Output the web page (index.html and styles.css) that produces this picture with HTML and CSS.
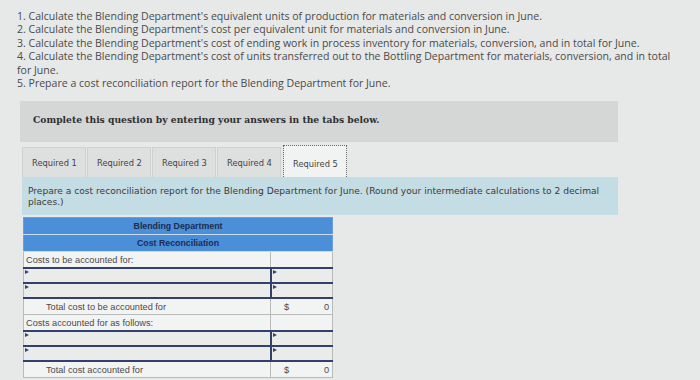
FILE: index.html
```html
<!DOCTYPE html>
<html>
<head>
    <link rel="stylesheet" href="styles.css">
</head>
<body>
    <ol class="steps">
        <li>1. Calculate the Blending Department's equivalent units of production for materials and conversion in June.</li>
        <li>2. Calculate the Blending Department's cost per equivalent unit for materials and conversion in June.</li>
        <li>3. Calculate the Blending Department's cost of ending work in process inventory for materials, conversion, and in total for June.</li>
        <li>4. Calculate the Blending Department's cost of units transferred out to the Bottling Department for materials, conversion, and in total for June.</li>
        <li>5. Prepare a cost reconciliation report for the Blending Department for June.</li>
    </ol>

    <div class="panel">
        <div class="notice">Complete this question by entering your answers in the tabs below.</div>

        <div class="tabs">
            <div class="tab">Required 1</div>
            <div class="tab">Required 2</div>
            <div class="tab">Required 3</div>
            <div class="tab">Required 4</div>
            <div class="tab active">Required 5</div>
        </div>

        <div class="instruction">Prepare a cost reconciliation report for the Blending Department for June. (Round your intermediate calculations to 2 decimal places.)</div>

        <table class="report">
            <colgroup><col class="col-label"><col class="col-value"></colgroup>
            <tr class="head"><th colspan="2">Blending Department</th></tr>
            <tr class="head"><th colspan="2">Cost Reconciliation</th></tr>
            <tr><td>Costs to be accounted for:</td><td></td></tr>
            <tr class="entry"><td></td><td class="value"></td></tr>
            <tr class="entry"><td></td><td class="value"></td></tr>
            <tr class="total"><td class="label">Total cost to be accounted for</td><td class="value"><span class="cur">$</span>0</td></tr>
            <tr><td>Costs accounted for as follows:</td><td></td></tr>
            <tr class="entry"><td></td><td class="value"></td></tr>
            <tr class="entry"><td></td><td class="value"></td></tr>
            <tr class="total"><td class="label">Total cost accounted for</td><td class="value"><span class="cur">$</span>0</td></tr>
        </table>
    </div>
</body>
</html>
```

FILE: styles.css
```css
/* General */
body, html {
    margin: 0;
    padding: 0;
    background: #e7e8e8;
}
body {
    padding: 10px 0 0 17px;
    font-family: "Open Sans", Lato, sans-serif;
    color: #4a4a4a;
}

/* Task list */
.steps {
    list-style: none;
    margin: 0;
    padding: 0;
    width: 660px;
    font-size: 10.55px;
    line-height: 13.4px;
}

/* Question panel */
.panel {
    margin: 11px 0 0 3px;
    width: 598px;
}
.notice {
    background: #d5d7d7;
    height: 41px;
    box-sizing: border-box;
    padding: 13px 0 0 13px;
    font-family: "DejaVu Serif", Georgia, serif;
    font-weight: bold;
    font-size: 9.2px;
    color: #2f2f2f;
}

/* Tabs */
.tabs {
    display: flex;
    align-items: flex-end;
    margin: 3px 0 0 2px;
    height: 32px;
}
.tab {
    width: 64px;
    height: 30px;
    box-sizing: border-box;
    padding: 10px 0 0 9px;
    background: #dedfdf;
    border: 1px solid #cfd0d0;
    border-bottom: none;
    margin-right: 1px;
    font-family: "DejaVu Sans", Verdana, sans-serif;
    font-size: 8.3px;
    color: #444;
}
.tab.active {
    height: 32px;
    margin-left: 1px;
    padding-top: 13px;
    background: #f1f2f2;
    border: 1px dotted #666;
    border-bottom: none;
}

/* Instruction */
.instruction {
    margin-left: 2px;
    background: #c4dce4;
    height: 38px;
    box-sizing: border-box;
    padding: 9px 12px 0 6px;
    font-family: "DejaVu Sans", Verdana, sans-serif;
    font-size: 9.1px;
    line-height: 10.5px;
    color: #3a3a3a;
}

/* Report table */
.report {
    margin: 2px 0 0 3px;
    border-collapse: collapse;
    table-layout: fixed;
    width: 309px;
    font-family: "Liberation Sans", Arial, sans-serif;
    font-size: 9.2px;
    color: #4a4a4a;
}
.col-label { width: 247px; }
.col-value { width: 62px; }
.report th {
    background: #4b8fd9;
    color: #1d2c4f;
    font-size: 8.8px;
    height: 16px;
    padding: 0;
    border: 1px solid #6a9ed6;
    border-bottom: 1px solid #c9dcee;
}
.report td {
    height: 15px;
    padding: 0 2px;
    background: #f2f3f3;
    border: 1px solid #b9baba;
    white-space: nowrap;
}
.report .entry td {
    position: relative;
    height: 13px;
    background: #eaebeb;
    border-top: 2px solid #33406c;
    border-bottom: 2px solid #33406c;
}
.report .entry td.value { border-left: 2px solid #33406c; }
.report .entry td::before {
    content: "";
    position: absolute;
    top: 1px;
    left: 1px;
    border-left: 4px solid #33406c;
    border-top: 2px solid transparent;
    border-bottom: 2px solid transparent;
}
.report .total .label { padding-left: 22px; }
.report .total .value {
    text-align: right;
    padding: 0 3px 0 13px;
}
.report .cur { float: left; }
```
